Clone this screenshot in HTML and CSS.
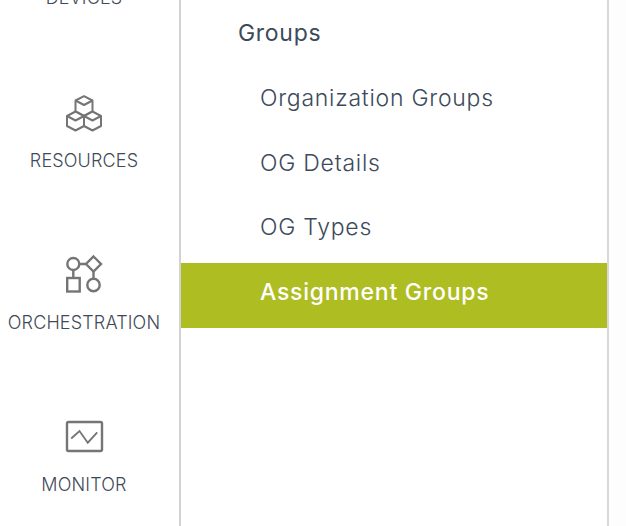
FILE: index.html
```html
<!DOCTYPE html>
<html lang="en">
<head>
<meta charset="utf-8">
<title>Assignment Groups</title>
<link rel="stylesheet" href="styles.css">
</head>
<body>
<div class="app">
  <nav class="rail">
    <a class="rail-item rail-item--cut"><span class="rail-label">DEVICES</span></a>
    <a class="rail-item">
      <svg class="rail-icon" viewBox="0 0 36 36" fill="none" stroke="#757575" stroke-width="2" stroke-linejoin="round">
        <path d="M18 1.200l8.500 4.300v11L18 21l-8.500-4.500v-11z"/>
        <path d="M9.500 5.500L18 10l8.500-4.500"/>
        <path d="M9.500 16.500L18 21v10l-8.500 4.500L1 31V21z" fill="#fff"/>
        <path d="M1 21l8.500 4.500L18 21"/>
        <path d="M26.500 16.500L35 21v10l-8.500 4.500L18 31V21z" fill="#fff"/>
        <path d="M18 21l8.500 4.500L35 21"/>
      </svg>
      <span class="rail-label">RESOURCES</span>
    </a>
    <a class="rail-item">
      <svg class="rail-icon" viewBox="0 0 36 36" fill="none" stroke="#757575" stroke-width="2.400">
        <circle cx="7.300" cy="7" r="6"/>
        <path d="M27.500 -.5l7.500 7.500-7.500 7.500-7.500-7.500z"/>
        <path d="M13.300 7h6.700M7.300 13v8M27.500 14.500v7.500"/>
        <rect x="1.200" y="21" width="12.500" height="13.500"/>
        <circle cx="27.500" cy="28" r="6.200"/>
      </svg>
      <span class="rail-label">ORCHESTRATION</span>
    </a>
    <a class="rail-item">
      <svg class="rail-icon" viewBox="0 0 36 36" fill="none" stroke="#757575">
        <rect x="1" y="3" width="35" height="29" rx="1.500" stroke-width="2.400"/>
        <path d="M5.200 19.500L13.500 12l8.300 11.700L31.200 13.300" stroke-width="1.800"/>
      </svg>
      <span class="rail-label">MONITOR</span>
    </a>
  </nav>
  <section class="panel">
    <h2 class="panel-title">Groups</h2>
    <ul class="menu">
      <li class="menu-item">Organization Groups</li>
      <li class="menu-item">OG Details</li>
      <li class="menu-item">OG Types</li>
      <li class="menu-item menu-item--active">Assignment Groups</li>
    </ul>
  </section>
</div>
</body>
</html>
```
FILE: styles.css
```css
html, body {
  margin: 0;
  height: 100%;
  overflow: hidden;
  background: #fdfdfd;
}
.app {
  display: flex;
  height: 526px;
  width: 626px;
  overflow: hidden;
  font-family: Inter, Lato, sans-serif;
}
.rail {
  box-sizing: border-box;
  width: 181px;
  flex: none;
  background: #fff;
  border-right: 2px solid #d3d3d3;
  padding-right: 11px;
  display: flex;
  flex-direction: column;
  margin-top: -87px;
}
.rail-item {
  height: 162px;
  flex: none;
  box-sizing: border-box;
  padding-top: 20px;
  display: flex;
  flex-direction: column;
  align-items: center;
  gap: 19px;
}
.rail-item--cut {
  justify-content: flex-end;
  padding-bottom: 66px;
}
.rail-icon {
  width: 36px;
  height: 36px;
  flex: none;
  overflow: visible;
}
.rail-label {
  font-size: 18px;
  font-weight: 300;
  line-height: 22px;
  color: #3f4a57;
  letter-spacing: 0.15px;
  white-space: nowrap;
}
.panel {
  box-sizing: border-box;
  width: 428px;
  flex: none;
  height: 526px;
  background: #fff;
  border-right: 2px solid #d8d8d8;
}
.panel-title {
  margin: 0;
  padding: 19px 0 22px 57px;
  font-size: 23px;
  line-height: 28px;
  font-weight: 400;
  color: #3d4a5a;
  letter-spacing: 0.7px;
}
.menu {
  list-style: none;
  margin: 0;
  padding: 0;
}
.menu-item {
  height: 64.670px;
  box-sizing: border-box;
  padding: 15px 0 0 79px;
  font-size: 23px;
  font-weight: 300;
  line-height: 28px;
  color: #3d4a5a;
  letter-spacing: 0.75px;
}
.menu-item--active {
  background: #aebd22;
  color: #fff;
  font-weight: 500;
  height: 65px;
}
```
